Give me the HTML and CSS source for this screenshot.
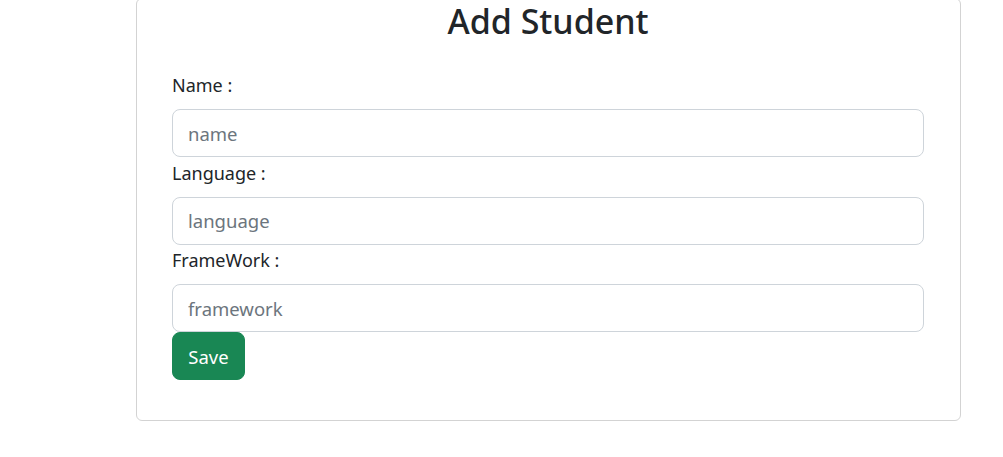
FILE: index.html
```html
<!DOCTYPE html>
<html lang="en">
<head>
<meta charset="utf-8">
<title>Add Student</title>
<link rel="stylesheet" href="styles.css">
</head>
<body>
  <div class="card">
    <h1 class="title">Add Student</h1>
    <form class="form">
      <label class="label" for="name">Name :</label>
      <input class="input" id="name" type="text" placeholder="name">
      <label class="label" for="language">Language :</label>
      <input class="input" id="language" type="text" placeholder="language">
      <label class="label" for="framework">FrameWork :</label>
      <input class="input" id="framework" type="text" placeholder="framework">
      <button class="btn-save" type="button">Save</button>
    </form>
  </div>
</body>
</html>
```

FILE: styles.css
```css
html, body {
  margin: 0;
  padding: 0;
  background: #ffffff;
}
body {
  font-family: "Noto Sans", "Open Sans", sans-serif;
  color: #212529;
  overflow: hidden;
}
.card {
  box-sizing: border-box;
  width: 825px;
  margin: -2px 0 0 136px;
  border: 1px solid #d3d3d3;
  border-radius: 6px;
  padding: 1px 36px 40px 35px;
}
.title {
  margin: 0 0 30px 0;
  font-size: 34px;
  line-height: 42px;
  font-weight: 500;
  text-align: center;
  color: #212529;
}
.form {
  display: flex;
  flex-direction: column;
  align-items: flex-start;
}
.label {
  display: block;
  font-size: 18px;
  line-height: 27px;
  margin: 2.5px 0 10px 0;
  color: #212529;
}
.label:first-child {
  margin-top: 0;
}
.input {
  box-sizing: border-box;
  width: 100%;
  height: 48px;
  padding: 0 15px;
  border: 1px solid #ced4da;
  border-radius: 8px;
  font-family: "Noto Sans", "Open Sans", sans-serif;
  font-size: 18.5px;
  color: #212529;
  background: #fff;
  outline: none;
}
.input::placeholder {
  color: #6c757d;
  opacity: 1;
}
.btn-save {
  box-sizing: border-box;
  height: 48px;
  width: 73px;
  padding: 0;
  border: 1px solid #198754;
  border-radius: 8px;
  background: #198754;
  color: #ffffff;
  font-family: "Noto Sans", "Open Sans", sans-serif;
  font-size: 18.5px;
  cursor: pointer;
}
```
